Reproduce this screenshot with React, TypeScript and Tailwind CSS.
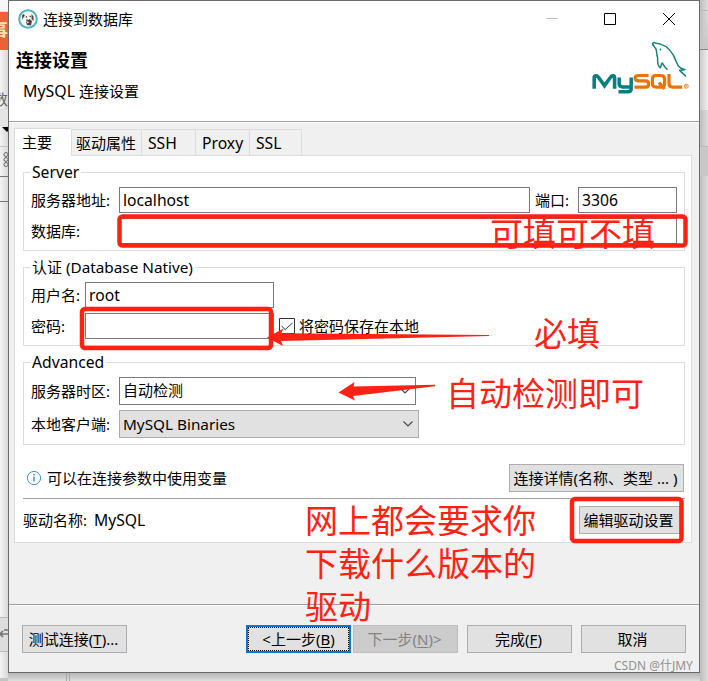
import type { ReactNode } from "react";

const Latin = ({ children, className = "text-[15.7px]" }: { children: ReactNode; className?: string }) => (
  <span className={className}>{children}</span>
);

function Group({ title, className, children }: { title: ReactNode; className: string; children: ReactNode }) {
  return (
    <section className={`border border-[#dcdcdc] ${className}`}>
      <div className="-mt-[11px] ml-[6px] flex h-5 w-fit items-center bg-white px-[2px] leading-5">{title}</div>
      {children}
    </section>
  );
}

function Field({ children = null, className }: { children?: ReactNode; className: string }) {
  return (
    <div className={`flex h-[26px] shrink-0 items-center border border-[#7a7a7a] bg-white pl-[3px] ${className}`}>
      {children}
    </div>
  );
}

function Button({ children, className }: { children: ReactNode; className: string }) {
  return (
    <button className={`flex h-7 shrink-0 items-center justify-center whitespace-nowrap border leading-5 ${className}`}>
      {children}
    </button>
  );
}

function Chevron() {
  return (
    <svg width="12" height="8" viewBox="0 0 12 8" fill="none" stroke="#444" strokeWidth="1.1">
      <path d="M1.5 1.5 6 6l4.5-4.5" />
    </svg>
  );
}

function MySqlLogo() {
  return (
    <svg width="100" height="54" viewBox="0 0 100 54" fill="none">
      <g className="stroke-[#08807f]" strokeWidth="3.6">
        <path d="M3.2 47.8V37c0-3.2 3-2.6 4.2-.8l6.1 8.400 6.100-8.400c1.200-1.800 4-2.400 4 .8v10.800" />
        <path d="M28.2 36.500v6c0 2.400 1.200 3.400 3.400 3.400h7.200M40.2 36.500v10.900c0 2.300-1 3.300-3.300 3.300h-9.400" strokeWidth="3.500" />
      </g>
      <g className="stroke-[#ea7408]" strokeWidth="3.200">
        <path d="M57.5 34.500H47.3c-2.400 0-3.200.8-3.200 2.600s.8 2.700 3.200 2.700h7.200c2.400 0 3.200.9 3.200 3.100s-.8 3.200-3.200 3.200H43.400" />
        <path d="M65.100 34.500h4.800c2.700 0 3.700 1 3.700 3.500v4.600c0 2.600-1 3.500-3.700 3.500h-4.800c-2.700 0-3.700-1-3.700-3.500v-4.600c0-2.500 1-3.500 3.700-3.500zM68 41.500l5.500 6.500" />
        <path d="M78 33v9.500c0 2.600 1.100 3.600 3.700 3.600h9.500" />
        <circle cx="95.300" cy="45.200" r="2" strokeWidth=".8" />
        <path d="M94.700 46.400v-2.200h.8c1 0 .9 1.100 0 1.100l.9 1.100" strokeWidth=".6" />
      </g>
      <g className="stroke-[#16827f]" strokeWidth="1.5" strokeLinecap="round" strokeLinejoin="round">
        <path d="M61.8 3.500c-.8-1.200.8-2.400 2.300-1.600 1.500.8 3.200.6 4.800 1 7.800 2.200 13.600 9.800 16.400 17.800.7 2.300 2.300 4.800 4.300 6.300 1.500.9 3 1.400 4.400 1.400-1.800 1.100-3.600 1-5.400.9 1.900 2.300 4.200 3.800 6 5.600" />
        <path d="M61.8 3.500c1 1.700 2.300 3 3.100 4.400 1 2 .5 5 1.300 7 .9 2.300.1 5.700.8 8.400.5 1.700 1.400 3 2.400 3.400.7-1.200.6-3 1.800-4.700 1.500 2.100 2.500 4.600 4.700 6.200" />
      </g>
      <circle cx="69.400" cy="8.500" r=".9" className="fill-[#16827f]" />
    </svg>
  );
}

function BeaverIcon() {
  return (
    <svg width="20" height="20" viewBox="0 0 20 20">
      <circle cx="10" cy="10" r="8.800" fill="#f7f5f2" stroke="#4cb5bd" strokeWidth="2" />
      <path d="M4 6.500 5.500 5l1.400 1.500-1.500 2-1 2.500zM13.500 5l2 2.500v4.500L13.500 10zM8 13l3.500-3 2.500 2-1 4.500-4-.5z" fill="#4a4644" />
      <path d="M7.800 7.300h1.200v1.300H7.800zM11.600 6.800h1.200V8h-1.200zM8.300 10.500h1.600v1.200H8.300z" fill="#27292b" />
      <path d="m8.800 12.800 1.400-.4.6 1.500-1.300.3z" fill="#fff" />
    </svg>
  );
}

function LeftBackdrop() {
  return (
    <div className="flex h-[681px] w-2 shrink-0 flex-col overflow-hidden bg-gradient-to-r from-[#f3f3f3] to-[#d9d9d9]">
      <div className="h-3 shrink-0 border-b border-[#ddd] bg-[#f7f7f7]" />
      <div className="flex h-[38px] shrink-0 items-center justify-end bg-[#ee6036] text-[20px] font-bold text-[#ffe2ae]">事</div>
      <div className="flex h-[60px] shrink-0 items-end justify-end border-b border-[#ddd] pb-[2px] text-[15px] leading-4 text-[#666]">数</div>
      <div className="h-4 shrink-0 bg-[#e5e5e5]" />
      <svg className="shrink-0" width="8" height="6" viewBox="0 0 8 6"><path d="M2 1h10L7 6z" /></svg>
      <div className="mt-[14px] h-px shrink-0 bg-[#c8c8c8]" />
      <svg className="mt-[5px] shrink-0" width="8" height="15" viewBox="0 0 8 15" fill="none" stroke="#6a6a6a">
        <circle cx="6" cy="2.5" r="2" /><circle cx="6" cy="7.5" r="2" /><circle cx="6" cy="12.5" r="2" />
      </svg>
      <div className="mt-[9px] h-[26px] shrink-0 border-y border-[#777]" />
      <div className="h-[415px] shrink-0" />
      <div className="h-[35px] shrink-0 border-y border-[#bbb] bg-[#ddd] pt-[9px]">
        <svg width="8" height="12" viewBox="0 0 8 12" stroke="#777" strokeWidth="1.7" fill="none"><path d="M4 3h5M0 7h8M3 4 0 7l3 3" /></svg>
      </div>
      <div className="h-[26px] shrink-0" />
      <div className="flex-1 bg-[#c4c4c4]" />
    </div>
  );
}

function Header() {
  return (
    <header className="h-[121px] border-b border-[#a0a0a0] bg-white">
      <div className="flex h-[36px] items-center pl-[9px]">
        <BeaverIcon />
        <span className="ml-[5px] leading-5">连接到数据库</span>
        <svg className="ml-auto mr-[18px]" width="136" height="18" viewBox="0 0 136 18" fill="none" stroke="#000">
          <path d="M1 8.500h12" stroke="#c6c6c6" />
          <path d="M59.500 3.500h11v11h-11zM118 3l12 12M130 3l-12 12" />
        </svg>
      </div>
      <div className="flex justify-between pr-[8px]">
        <div className="pl-[7px] pt-[13px]">
          <h1 className="text-[18px] font-bold leading-5">连接设置</h1>
          <p className="ml-[7px] mt-[11px] leading-5"><Latin className="text-[15.9px]">MySQL</Latin> 连接设置</p>
        </div>
        <div className="mt-[4px]"><MySqlLogo /></div>
      </div>
    </header>
  );
}

function Tabs() {
  return (
    <div className="ml-[5px] flex h-7 items-end leading-5">
      <div className="z-10 -mb-px flex h-7 w-[57px] items-center border border-r-0 border-b-0 border-[#dcdcdc] bg-white pb-[2px] pl-[7px]">主要</div>
      <div className="flex h-[26px] w-[71px] items-center border-x border-t border-[#dcdcdc] pl-1">驱动属性</div>
      <div className="flex h-[26px] w-[54px] items-center border-r border-t border-[#dcdcdc] pl-[6px]"><Latin>SSH</Latin></div>
      <div className="flex h-[26px] w-[54px] items-center border-r border-t border-[#dcdcdc] pl-[6px]"><Latin>Proxy</Latin></div>
      <div className="flex h-[26px] w-[52px] items-center border-r border-t border-[#dcdcdc] pl-[6px]"><Latin>SSL</Latin></div>
    </div>
  );
}

function ConnectionForm() {
  return (
    <main className="ml-[5px] h-[388px] w-[678px] border border-[#dcdcdc] bg-white pl-[8px] pr-[6px] pt-4 leading-5">
      <Group title={<Latin>Server</Latin>} className="h-[79px] w-[662px]">
        <div className="mt-[5px] flex items-center pl-[7px]">
          <span className="w-[88px]">服务器地址:</span>
          <Field className="w-[411px]"><Latin>localhost</Latin></Field>
          <span className="ml-[5px] w-[43px]">端口:</span>
          <Field className="w-[99px]"><Latin>3306</Latin></Field>
        </div>
        <div className="mt-[5px] flex items-center pl-[7px]">
          <span className="w-[88px]">数据库:</span>
          <Field className="w-[558px]" />
        </div>
      </Group>
      <Group title={<span>认证 <Latin className="text-[15.3px]">(Database Native)</Latin></span>} className="mt-4 h-[79px] w-[662px]">
        <div className="mt-[5px] flex items-center pl-[7px]">
          <span className="w-[54px]">用户名:</span>
          <Field className="w-[189px]"><Latin>root</Latin></Field>
        </div>
        <div className="mt-[5px] flex items-center pl-[7px]">
          <span className="w-[54px]">密码:</span>
          <Field className="w-[189px]" />
          <svg className="ml-[5px]" width="16" height="16" viewBox="0 0 16 16" fill="white" stroke="#333">
            <path d="M.5.5h15v15H.5zM2.500 8l3.700 3.500L13.500 5" />
          </svg>
          <span className="ml-1">将密码保存在本地</span>
        </div>
      </Group>
      <Group title={<Latin>Advanced</Latin>} className="mt-4 h-[83px] w-[662px]">
        <div className="mt-[5px] flex items-center pl-[7px]">
          <span className="w-[88px]">服务器时区:</span>
          <div className="flex h-7 w-[297px] items-center justify-between border border-[#7a7a7a] pl-[3px] pr-1"><span className="pb-[2px]">自动检测</span><Chevron /></div>
        </div>
        <div className="mt-[5px] flex items-center pl-[7px]">
          <span className="w-[88px]">本地客户端:</span>
          <div className="flex h-7 w-[300px] items-center justify-between border border-[#adadad] bg-[#e1e1e1] pl-[3px] pr-1"><Latin className="text-[15.3px]">MySQL Binaries</Latin><Chevron /></div>
        </div>
      </Group>
      <div className="mt-[19px] flex h-[34px] items-start">
        <svg className="ml-[3px] mt-[6px]" width="16" height="16" viewBox="0 0 16 16" fill="none" stroke="#3d96d2">
          <circle cx="8" cy="8" r="6.600" /><path d="M8 6.500v5M8 4v1.400" strokeWidth="1.500" />
        </svg>
        <span className="ml-[5px] mt-1">可以在连接参数中使用变量</span>
        <Button className="ml-auto mr-px w-[175px] border-[#adadad] bg-[#e1e1e1] pr-[2px]">连接详情(名称、类型 ... )</Button>
      </div>
      <div className="h-px bg-[#a0a0a0]" />
      <div className="mt-[7px] flex items-center">
        <span>驱动名称:</span>
        <span className="ml-[7px] text-[15.7px]">MySQL</span>
        <Button className="ml-auto mr-[5px] w-[101px] border-[#adadad] bg-[#e1e1e1] pr-[2px]">编辑驱动设置</Button>
      </div>
    </main>
  );
}

function Footer() {
  return (
    <footer className="mt-[61px] border-t border-[#a0a0a0]">
      <div className="flex border-t border-white pl-[13px] pt-[19px]">
        <Button className="w-[105px] border-[#adadad] bg-[#e1e1e1] pr-[2px]">测试连接(<u className="underline-offset-2">T</u>)...</Button>
        <Button className="relative ml-[119px] w-[105px] border-2 border-[#0078d7] bg-[#e1e1e1] outline-1 -outline-offset-3 outline-dotted outline-black">&lt;上一步(<u className="underline-offset-2">B</u>)</Button>
        <Button className="ml-[2px] w-[105px] border-[#bfbfbf] bg-[#ccc] pr-[2px] text-[#838383]">下一步(<u className="underline-offset-2">N</u>)&gt;</Button>
        <Button className="ml-[9px] w-[105px] border-[#adadad] bg-[#e1e1e1] pr-[2px]">完成(<u className="underline-offset-2">F</u>)</Button>
        <Button className="ml-[9px] w-[105px] border-[#adadad] bg-[#e1e1e1] pr-[2px]">取消</Button>
      </div>
    </footer>
  );
}

function Annotations() {
  return (
    <div className="pointer-events-none absolute inset-0 z-20 whitespace-nowrap text-[33px] leading-[43px] text-[#ff2112]">
      <svg className="absolute inset-0" width="708" height="681" viewBox="0 0 708 681">
        <g fill="none" stroke="#ff2112" strokeWidth="4.5">
          <rect x="119.5" y="216.5" width="566" height="29" rx="3" />
          <rect x="82" y="309" width="189" height="39" rx="3" />
          <rect x="572" y="499" width="109.5" height="42" rx="3" />
        </g>
        <g fill="#ff2112">
          <path d="m267 337.500 16.500-9-2.300 4.800L489 335v1l-208 5 2 5z" />
          <path d="m338.500 392.500 16-10.500-1 4.500 81.500-1.700v1.400L353 396l2 4.500z" />
        </g>
      </svg>
      <div className="absolute left-[490px] top-[212px]">可填可不填</div>
      <div className="absolute left-[534px] top-[312px]">必填</div>
      <div className="absolute left-[446px] top-[372px]">自动检测即可</div>
      <div className="absolute left-[305px] top-[499px]">网上都会要求你<br />下载什么版本的<br />驱动</div>
      <div className="absolute left-[614px] top-[658px] text-[12px] leading-4 text-[#929292]">CSDN @什JMY</div>
    </div>
  );
}

export default function App() {
  return (
    <div className="relative flex h-[681px] w-[708px] overflow-hidden bg-[#d8d8d8] font-['Noto_Sans','Noto_Sans_CJK_SC',sans-serif] text-[15px] text-black">
      <LeftBackdrop />
      <div className="flex w-[692px] flex-col">
        <div className="h-[673px] border border-[#6b6b6b] bg-[#f0f0f0]">
          <Header />
          <div className="h-[5px] border-t border-white" />
          <Tabs />
          <ConnectionForm />
          <Footer />
        </div>
        <div className="flex h-2 bg-gradient-to-b from-[#b5b5b5] to-[#dedede]">
          <div className="ml-[58px] w-1 border-x border-[#aaa]" />
        </div>
      </div>
      <div className="flex flex-1 flex-col bg-gradient-to-r from-[#bdbdbd] to-[#dedede]">
        <div className="h-[11px] border-b border-[#bbb]" />
        <div className="h-[39px] border-b border-[#888] bg-gradient-to-b from-transparent to-[#c8c8c8]" />
        <div className="h-[60px] bg-gradient-to-r from-[#ccc] to-[#eee]" />
        <div className="h-9" />
        <div className="h-[30px] border-t border-[#bbb] bg-[#c8c8c8]" />
      </div>
      <Annotations />
    </div>
  );
}
